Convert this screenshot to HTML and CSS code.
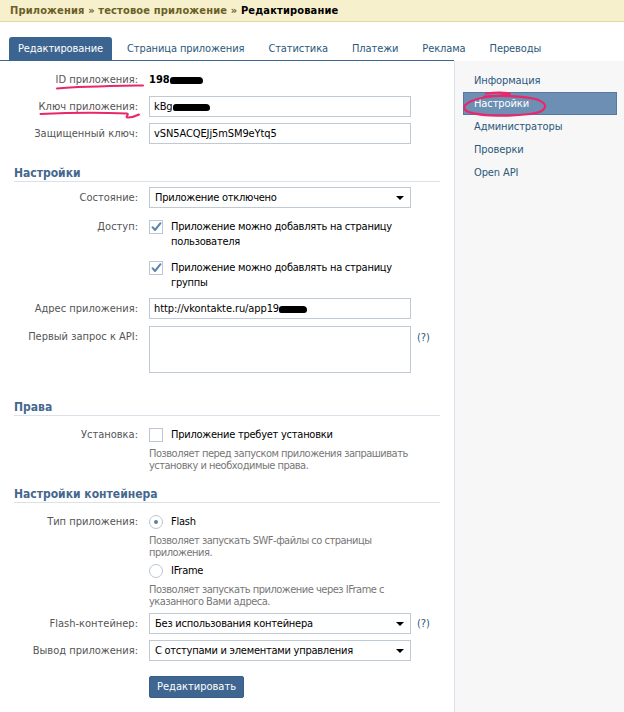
FILE: index.html
```html
<!DOCTYPE html>
<html lang="ru">
<head>
<meta charset="utf-8">
<title>Редактирование</title>
<link rel="stylesheet" href="styles.css">
</head>
<body>
<div class="crumbs"><span>Приложения</span> » <span>тестовое приложение</span> » <span class="cur">Редактирование</span></div>
<div class="layout">
  <div class="tabs">
    <div class="tab active">Редактирование</div>
    <div class="tab">Страница приложения</div>
    <div class="tab">Статистика</div>
    <div class="tab">Платежи</div>
    <div class="tab">Реклама</div>
    <div class="tab">Переводы</div>
  </div>
  <div class="tabs-gap"></div>

  <div class="form">
    <div class="row r-id">
      <div class="lbl">ID приложения:</div>
      <div class="ctl val">198<span class="redact w32"></span></div>
    </div>
    <div class="row r-key">
      <div class="lbl lbl-in">Ключ приложения:</div>
      <div class="ctl input">kBg<span class="redact w37"></span></div>
    </div>
    <div class="row r-sec">
      <div class="lbl lbl-in">Защищенный ключ:</div>
      <div class="ctl input">vSN5ACQEJj5mSM9eYtq5</div>
    </div>

    <h2 class="sec s1">Настройки</h2>
    <div class="row r-state">
      <div class="lbl lbl-in">Состояние:</div>
      <div class="ctl select"><span>Приложение отключено</span><i class="arrow"></i></div>
    </div>
    <div class="row r-cb1">
      <div class="lbl">Доступ:</div>
      <div class="ctl check"><span class="box on"><svg viewBox="0 0 14 14" width="14" height="14"><path d="M3.5 7.2 L6 10 L11.5 3.2" fill="none" stroke="#5c84ad" stroke-width="2" stroke-linecap="round" stroke-linejoin="round"/></svg></span><span class="ctext">Приложение можно добавлять на страницу пользователя</span></div>
    </div>
    <div class="row r-cb2">
      <div class="lbl"></div>
      <div class="ctl check"><span class="box on"><svg viewBox="0 0 14 14" width="14" height="14"><path d="M3.5 7.2 L6 10 L11.5 3.2" fill="none" stroke="#5c84ad" stroke-width="2" stroke-linecap="round" stroke-linejoin="round"/></svg></span><span class="ctext">Приложение можно добавлять на страницу группы</span></div>
    </div>
    <div class="row r-addr">
      <div class="lbl lbl-in">Адрес приложения:</div>
      <div class="ctl input">http://vkontakte.ru/app19<span class="redact w28"></span></div>
    </div>
    <div class="row r-api">
      <div class="lbl lbl-in">Первый запрос к API:</div>
      <div class="ctl textarea"></div>
      <div class="help help-top">(?)</div>
    </div>

    <h2 class="sec s2">Права</h2>
    <div class="row r-inst">
      <div class="lbl">Установка:</div>
      <div class="ctl check"><span class="box"></span><span class="ctext">Приложение требует установки</span></div>
    </div>
    <div class="row r-d1">
      <div class="lbl"></div>
      <div class="ctl desc">Позволяет перед запуском приложения запрашивать установку и необходимые права.</div>
    </div>

    <h2 class="sec s3">Настройки контейнера</h2>
    <div class="row r-flash">
      <div class="lbl">Тип приложения:</div>
      <div class="ctl check"><span class="radio on"></span><span class="ctext">Flash</span></div>
    </div>
    <div class="row r-d2">
      <div class="lbl"></div>
      <div class="ctl desc">Позволяет запускать SWF-файлы со страницы приложения.</div>
    </div>
    <div class="row r-iframe">
      <div class="lbl"></div>
      <div class="ctl check"><span class="radio"></span><span class="ctext">IFrame</span></div>
    </div>
    <div class="row r-d3">
      <div class="lbl"></div>
      <div class="ctl desc">Позволяет запускать приложение через IFrame с указанного Вами адреса.</div>
    </div>
    <div class="row r-fc">
      <div class="lbl lbl-in">Flash-контейнер:</div>
      <div class="ctl select"><span>Без использования контейнера</span><i class="arrow"></i></div>
      <div class="help help-mid">(?)</div>
    </div>
    <div class="row r-out">
      <div class="lbl lbl-in">Вывод приложения:</div>
      <div class="ctl select"><span>С отступами и элементами управления</span><i class="arrow"></i></div>
    </div>
    <div class="row r-btn">
      <div class="lbl"></div>
      <div class="ctl"><button class="btn">Редактировать</button></div>
    </div>
  </div>

  <div class="side">
    <div class="side-item">Информация</div>
    <div class="side-item sel">Настройки</div>
    <div class="side-item">Администраторы</div>
    <div class="side-item">Проверки</div>
    <div class="side-item">Open API</div>
  </div>
</div>

<svg class="marks" width="624" height="712" viewBox="0 0 624 712">
  <path d="M57 88.5 C 80 86.5 115 86 143 85.5" fill="none" stroke="#e8286a" stroke-width="2" stroke-linecap="round"/>
  <path d="M40.5 114 C 70 112.5 105 112.5 127 113.5 C 130 114 124 117.5 128 117.5 C 132 117.5 136 116 139 114.5" fill="none" stroke="#e8286a" stroke-width="2" stroke-linecap="round" stroke-linejoin="round"/>
  <path d="M486 93.5 C 502 91.5 522 93.5 500 95.5 C 474 97.5 461 104 465 109.5 C 470 116 506 117 530 114 C 547 112 550 104 537 99.5 C 523 95.5 498 95.5 484 96.5" fill="none" stroke="#e8286a" stroke-width="2.2" stroke-linecap="round" stroke-linejoin="round"/>
</svg>
</body>
</html>
```

FILE: styles.css
```css
* { box-sizing: border-box; }
html, body { margin: 0; padding: 0; }
body {
  position: relative;
  width: 624px;
  height: 712px;
  overflow: hidden;
  background: #fff;
  color: #000;
  font-family: "DejaVu Sans Condensed", "DejaVu Sans", sans-serif;
  font-size: 11px;
  letter-spacing: -0.25px;
}

.crumbs {
  height: 22px;
  line-height: 21px;
  padding-left: 10px;
  background: #f7f0cc;
  border-bottom: 1px solid #e2d8a4;
  font-weight: bold;
  color: #6b5f28;
  letter-spacing: 0.15px;
}
.crumbs .cur { color: #000; }

.layout {
  display: grid;
  grid-template-columns: 454px 170px;
  grid-template-rows: 39px 651px;
}

.tabs {
  display: flex;
  align-items: flex-end;
  padding-left: 9px;
  border-bottom: 1px solid #3c6490;
}
.tab {
  height: 23px;
  line-height: 23px;
  padding: 0 9px;
  margin-right: 6px;
  color: #2b587a;
  border-radius: 3px 3px 0 0;
  white-space: nowrap;
  letter-spacing: -0.1px;
}
.tab.active { background: #3c6490; color: #fff; }

.side {
  background: #f7f7f7;
  border-left: 1px solid #dae1e8;
  padding-top: 8px;
}
.side-item {
  height: 23px;
  line-height: 23px;
  padding-left: 19px;
  color: #2b587a;
  letter-spacing: -0.1px;
}
.side-item.sel {
  margin: 0 7px 0 8px;
  padding-left: 10px;
  line-height: 21px;
  background: #6d8fb3;
  border: 1px solid #557aa1;
  color: #fff;
}

.form { padding-top: 11px; }
.row { display: flex; align-items: flex-start; }
.lbl {
  flex: none;
  width: 138px;
  text-align: right;
  line-height: 15px;
  color: #555;
  white-space: nowrap;
  letter-spacing: 0;
}
.lbl-in { padding-top: 3px; }
.ctl { flex: none; width: 262px; margin-left: 11px; }
.val { font-weight: bold; line-height: 15px; letter-spacing: 0; }

.input, .select {
  height: 21px;
  line-height: 19px;
  border: 1px solid #c0cad5;
  padding: 0 4px;
  background: #fff;
  white-space: nowrap;
}
.input { letter-spacing: -0.1px; }
.select { display: flex; align-items: center; justify-content: space-between; padding: 0 5px 0 5px; }
.arrow {
  width: 0; height: 0;
  border-left: 4px solid transparent;
  border-right: 4px solid transparent;
  border-top: 4px solid #000;
  margin-right: 1px;
}
.textarea { height: 47px; border: 1px solid #c0cad5; background: #fff; }

.redact {
  display: inline-block;
  height: 7px;
  background: #000;
  border-radius: 3px 4px 3px 2px;
  vertical-align: -1px;
}
.w32 { width: 33px; }
.w37 { width: 37px; }
.w28 { width: 28px; }

.help { margin-left: 6px; color: #2b587a; line-height: 15px; letter-spacing: 0; }
.help-top { padding-top: 4px; }
.help-mid { padding-top: 3px; }

.sec {
  margin: 0 14px;
  height: 17px;
  line-height: 16px;
  font-size: 12px;
  font-weight: bold;
  color: #45688e;
  border-bottom: 1px solid #dae1e8;
  letter-spacing: 0;
}

.check { display: flex; align-items: flex-start; line-height: 15px; }
.box, .radio {
  flex: none;
  width: 14px;
  height: 14px;
  margin-top: 0.5px;
  margin-right: 8px;
  border: 1px solid #bcc6d0;
  background: #fff;
  position: relative;
}
.box svg { position: absolute; left: -1px; top: -1px; }
.radio { border-radius: 50%; }
.radio.on::after {
  content: "";
  position: absolute;
  left: 4px; top: 4px;
  width: 4px; height: 4px;
  border-radius: 50%;
  background: #5e7fa3;
}
.ctext { color: #000; }

.desc { width: 275px; color: #777; line-height: 12px; letter-spacing: -0.5px; }

.btn {
  display: block;
  width: 95px;
  height: 22px;
  padding: 0;
  border: 1px solid #36608b;
  border-radius: 2px;
  background: #3e6691;
  color: #fff;
  font-family: inherit;
  font-size: 11px;
  line-height: 20px;
  letter-spacing: 0;
}

/* vertical rhythm */
.r-key { margin-top: 9px; }
.r-sec { margin-top: 6px; }
.s1 { margin-top: 21px; }
.r-state { margin-top: 5px; }
.r-cb1 { margin-top: 11px; }
.r-cb2 { margin-top: 11px; }
.r-addr { margin-top: 8px; }
.r-api { margin-top: 7px; }
.s2 { margin-top: 26px; }
.r-inst { margin-top: 11px; }
.r-d1 { margin-top: 6px; }
.s3 { margin-top: 14px; }
.r-flash { margin-top: 11px; }
.r-d2 { margin-top: 6px; }
.r-iframe { margin-top: 4px; }
.r-d3 { margin-top: 6px; }
.r-fc { margin-top: 5px; }
.r-out { margin-top: 6px; }
.r-btn { margin-top: 15px; }

.marks {
  position: absolute;
  left: 0;
  top: 0;
  pointer-events: none;
}
```
